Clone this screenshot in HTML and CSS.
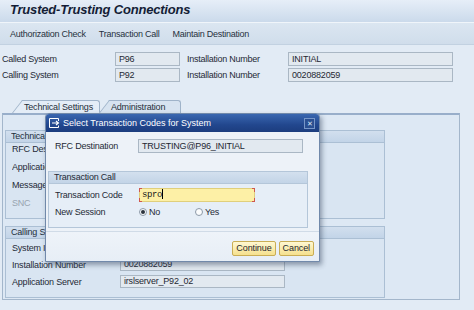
FILE: index.html
```html
<!DOCTYPE html>
<html>
<head>
<meta charset="utf-8">
<link rel="stylesheet" href="styles.css">
</head>
<body>
<div class="app">
  <header class="titlebar"><h1>Trusted-Trusting Connections</h1></header>
  <nav class="toolbar">
    <span>Authorization Check</span>
    <span>Transaction Call</span>
    <span>Maintain Destination</span>
  </nav>
  <section class="sysinfo">
    <span class="lbl">Called System</span><div class="field">P96</div>
    <span class="lbl">Installation Number</span><div class="field">INITIAL</div>
    <span class="lbl">Calling System</span><div class="field">P92</div>
    <span class="lbl">Installation Number</span><div class="field">0020882059</div>
  </section>
  <div class="tabs">
    <div class="tab active">Technical Settings</div>
    <div class="tab">Administration</div>
  </div>
  <div class="tabpanel">
    <div class="group g1">
      <div class="ghead"><span class="clip">Technical Settings</span></div>
      <div class="gbody">
        <div class="grow"><span class="clip">RFC Destination</span></div>
        <div class="grow"><span class="clip">Application Server</span></div>
        <div class="grow"><span class="clip">Message Server</span></div>
        <div class="grow dim"><span class="clip">SNC</span></div>
      </div>
    </div>
    <div class="group g2">
      <div class="ghead"><span class="clip">Calling System</span></div>
      <div class="gbody">
        <div class="grow"><span class="clip">System ID</span></div>
        <div class="grow"><span class="glbl">Installation Number</span><div class="field gf">0020882059</div></div>
        <div class="grow"><span class="glbl">Application Server</span><div class="field gf">irslserver_P92_02</div></div>
      </div>
    </div>
  </div>

  <div class="dialog">
    <div class="dtitle">
      <svg class="dicon" width="11" height="10" viewBox="0 0 11 10">
        <path d="M0.5 0.5h9v2.5M0.5 0.5v9h9v-2" fill="none" stroke="#fff" stroke-width="1"/>
        <path d="M3 5h6M7 3l2.5 2L7 7" fill="none" stroke="#fff" stroke-width="1.1"/>
      </svg>
      <span class="dtext">Select Transaction Codes for System</span>
      <span class="dclose">✕</span>
    </div>
    <div class="dbody">
      <div class="drow rfc"><span class="dlbl">RFC Destination</span><div class="field dfield">TRUSTING@P96_INITIAL</div></div>
      <div class="dgroup">
        <div class="dghead">Transaction Call</div>
        <div class="dgbody">
          <div class="drow"><span class="dlbl">Transaction Code</span><div class="tcode">spro<span class="caret"></span><i class="c tl"></i><i class="c bl"></i><i class="c tr"></i><i class="c br"></i></div></div>
          <div class="drow"><span class="dlbl">New Session</span>
            <div class="radios">
              <span class="radio on"><span class="dot"></span>No</span>
              <span class="radio"><span class="dot"></span>Yes</span>
            </div>
          </div>
        </div>
      </div>
    </div>
    <div class="dfoot">
      <button class="btn">Continue</button><button class="btn">Cancel</button>
    </div>
  </div>
</div>
</body>
</html>
```
FILE: styles.css
```css
* { box-sizing: border-box; margin: 0; padding: 0; }
body {
  width: 474px; height: 310px; overflow: hidden;
  background: #e2ebf5;
  font-family: "Liberation Sans", Arial, sans-serif;
  font-size: 9px; color: #1f2a36;
}
.app { position: relative; width: 474px; height: 310px; }

.titlebar {
  height: 22px;
  background: linear-gradient(#e6eef8, #cbdaeb);
  padding: 3px 0 0 10px;
}
.titlebar h1 {
  font-size: 13px; line-height: 14px; font-style: italic; font-weight: bold;
  letter-spacing: -0.2px; color: #141d36;
}
.toolbar {
  height: 23px;
  background: linear-gradient(#dbe6f1, #d0ddeb);
  border-top: 1px solid #f0f5fa;
  border-bottom: 1px solid #c2d1e1;
  display: flex; align-items: center; gap: 13px;
  padding-left: 10px; letter-spacing: -0.25px; color: #27313d;
}

.sysinfo {
  margin: 7px 0 0 2px;
  display: grid;
  grid-template-columns: 113px 65px 108px 165px;
  row-gap: 2px;
  grid-auto-rows: 14px;
  align-items: center;
  letter-spacing: -0.25px;
}
.sysinfo .lbl:nth-child(3), .sysinfo .lbl:nth-child(7) { padding-left: 7px; }
.field {
  height: 14px; line-height: 12px;
  background: #e2e9f0;
  border: 1px solid #aab7c4;
  padding-left: 3px; color: #1e2833;
  letter-spacing: -0.2px;
  white-space: nowrap; overflow: hidden;
}

.tabs {
  display: flex; height: 13px; margin-top: 18px;
  padding-left: 22px; gap: 9px;
}
.tab {
  position: relative; z-index: 0;
  height: 13px; line-height: 12px;
  padding: 0 6px 0 2px;
  border: 1px solid #9fb3c9; border-left: none; border-bottom: none;
  border-radius: 0 3px 0 0;
  background: #d7e3f0; color: #26303b; letter-spacing: -0.2px;
}
.tab::before {
  content: ""; position: absolute; z-index: -1;
  left: -10px; top: -1px; bottom: 0; width: 14px;
  background: #d7e3f0;
  border-left: 1px solid #9fb3c9; border-top: 1px solid #9fb3c9;
  transform: skewX(-38deg); transform-origin: bottom left;
}
.tab.active, .tab.active::before { background: #e4edf7; }
.tab.active { width: 78px; }
.tab:not(.active) { width: 72px; }

.tabpanel {
  margin: 0 14px 0 2px;
  height: 187px;
  border: 1px solid #a3b6cb;
  border-top: 2px solid #98aeca;
  background: #dde8f4;
  padding: 15px 0 0 2px;
}
.group {
  width: 380px;
  border: 1px solid #abbfd4;
  background: #d9e5f2;
}
.ghead {
  height: 12px; line-height: 11px;
  background: linear-gradient(#d2dfee, #c2d4e8);
  border-bottom: 1px solid #abbfd4;
  padding-left: 5px; letter-spacing: -0.2px; color: #24303c;
}
.clip { display: inline-block; width: 34px; overflow: hidden; white-space: nowrap; vertical-align: top; }
.g1 { height: 89px; }
.g1 .gbody { margin-top: -3px; }
.g1 .grow { height: 18px; }
.g2 { height: 72px; margin-top: 7px; }
.g2 .gbody { padding-top: 0; }
.g2 .grow { height: 17px; }
.grow {
  display: flex; align-items: center;
  padding-left: 6px; letter-spacing: -0.2px;
}
.glbl { width: 108px; white-space: nowrap; }
.grow.dim { color: #98a4b0; }
.gf { width: 165px; height: 13px; line-height: 11px; }

/* dialog */
.dialog {
  position: absolute; left: 45px; top: 113px;
  width: 275px; height: 149px;
  background: #edf2f8;
  border: 1px solid #7189aa;
  border-radius: 4px 4px 0 0;
  box-shadow: 2px 3px 5px rgba(40, 55, 80, 0.45);
  display: flex; flex-direction: column;
}
.dtitle {
  height: 18px; flex: none;
  background: linear-gradient(#3a67b0, #22478e 60%, #1c3d7e);
  border-radius: 3px 3px 0 0;
  display: flex; align-items: center;
  padding: 0 4px 0 3px; color: #fff;
}
.dicon { flex: none; margin-right: 3px; }
.dtext { flex: 1; font-size: 9px; letter-spacing: 0; }
.dclose {
  width: 11px; height: 11px; flex: none;
  background: #2a4f92; border: 1px solid #7796c8;
  font-size: 7px; line-height: 9px; text-align: center; color: #d9e6f7;
}
.dbody { flex: 1; padding: 7px 11px 0 2px; }
.drow {
  display: flex; align-items: center; height: 14px;
  letter-spacing: -0.2px;
}
.dlbl { width: 90px; padding-left: 7px; flex: none; }
.rfc { margin-bottom: 18px; }
.dfield { width: 165px; height: 14px; }
.dgroup {
  border: 1px solid #b4c6d9;
  background: #e6eef7;
  height: 57px;
}
.dghead {
  height: 12px; line-height: 11px;
  background: linear-gradient(#d3e0ee, #c3d4e7);
  border-bottom: 1px solid #b4c6d9;
  padding-left: 5px; letter-spacing: -0.2px;
}
.dgbody { padding-top: 2px; }
.dgbody .drow { height: 17px; }
.dgbody .dlbl { padding-left: 6px; }
.tcode {
  position: relative;
  width: 116px; height: 14px; line-height: 13px;
  background: #fdf0a6;
  border: 1px solid #e0cf7c;
  padding-left: 2px;
  font-family: "Liberation Mono", monospace; font-size: 9px; letter-spacing: -0.4px;
  color: #1a1a1a;
}
.caret { display: inline-block; width: 1px; height: 10px; background: #000; vertical-align: -2px; }
.c { position: absolute; width: 3px; height: 4px; border-color: #d0574f; border-style: solid; border-width: 0; }
.c.tl { left: -1px; top: -1px; border-left-width: 1px; border-top-width: 1px; }
.c.bl { left: -1px; bottom: -1px; border-left-width: 1px; border-bottom-width: 1px; }
.c.tr { right: -1px; top: -1px; border-right-width: 1px; border-top-width: 1px; }
.c.br { right: -1px; bottom: -1px; border-right-width: 1px; border-bottom-width: 1px; }
.radios { display: flex; }
.radio { display: flex; align-items: center; width: 56px; gap: 2px; }
.dot {
  width: 8px; height: 8px; border-radius: 50%;
  border: 1px solid #8c99a8; background: #fbfcfd;
  display: flex; align-items: center; justify-content: center;
}
.radio.on .dot::after { content: ""; width: 4px; height: 4px; border-radius: 50%; background: #2b333d; }

.dfoot {
  height: 30px; flex: none;
  border-top: 1px solid #d0dbe7;
  background: linear-gradient(#eef3f9, #e7eef6);
  display: flex; justify-content: flex-end; align-items: center;
  gap: 3px; padding: 3px 5px 0 0;
}
.btn {
  height: 15px; padding: 0 3px;
  font-family: "Liberation Sans", Arial, sans-serif; font-size: 9px; letter-spacing: -0.1px;
  color: #1e2630;
  background: linear-gradient(#fff8d2, #f5e08e);
  border: 1px solid #c9ad55; border-radius: 2px;
}
```
